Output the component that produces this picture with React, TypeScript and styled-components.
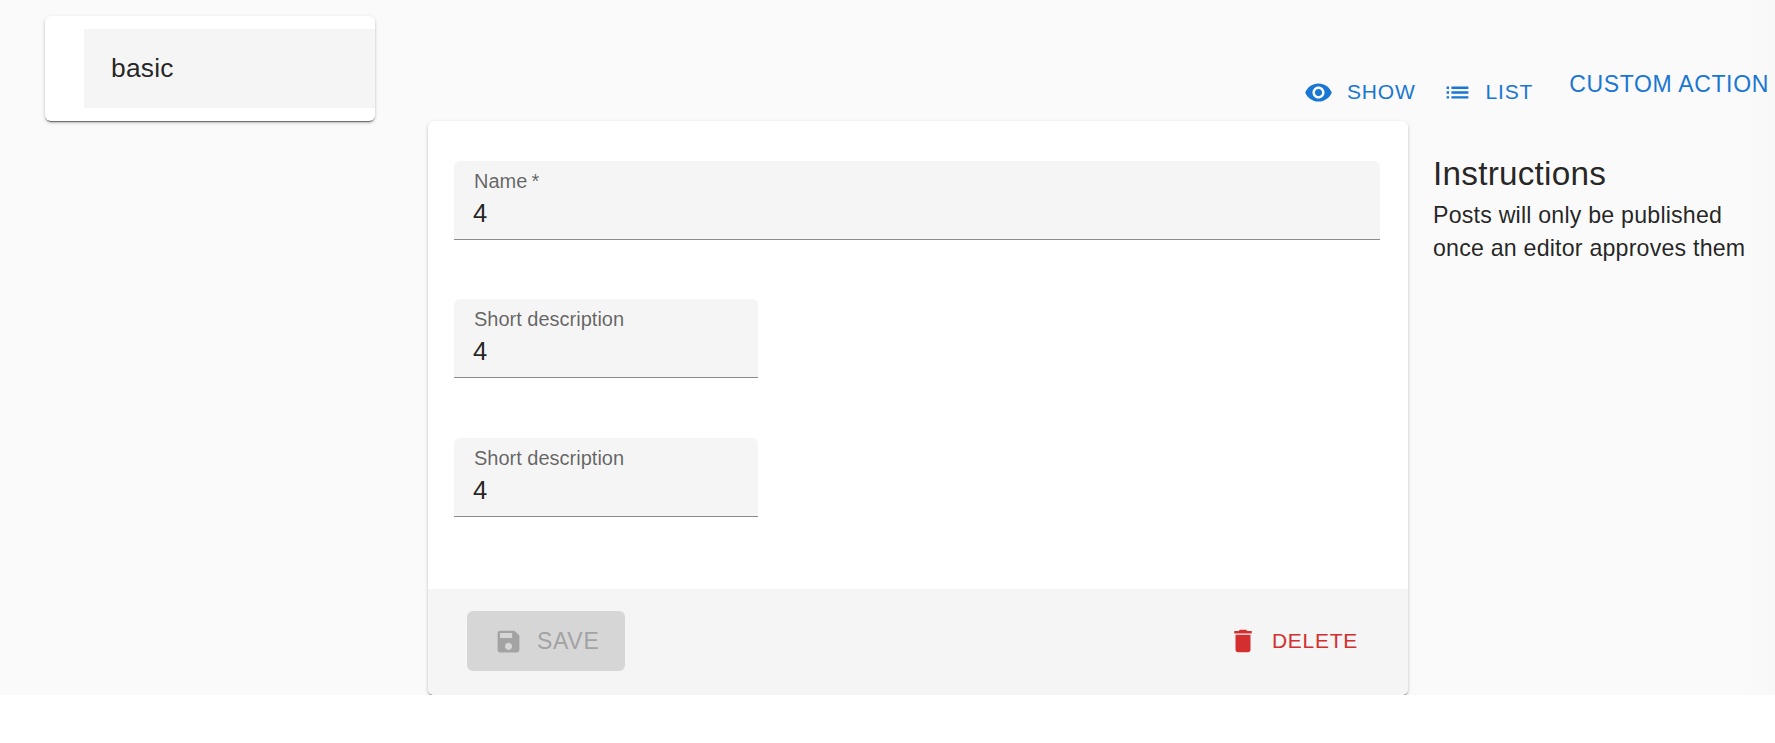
import React from 'react';
import styled, { createGlobalStyle } from 'styled-components';

const Global = createGlobalStyle`
  html, body { margin: 0; padding: 0; background: #fff; }
  body { font-family: "Liberation Sans", Arial, sans-serif; color: rgba(0,0,0,0.87); }
`;
const cardShadow = '0 2px 1px -1px rgba(0,0,0,.5), 0 2px 3px 0 rgba(0,0,0,.16), 0 1px 4px 0 rgba(0,0,0,.1)';
const Page = styled.div`
  display: flex; align-items: flex-start; height: 695px; overflow: hidden;
  background: linear-gradient(90deg, #fafafa calc(100% - 30px), #f8f8f8 100%);
`;
const Sidebar = styled.nav`
  flex: none; width: 330px; margin: 16px 0 0 45px; padding: 13px 0 13px 39px; box-sizing: border-box;
  background: #fff; border-radius: 6px; box-shadow: ${cardShadow};
`;
const MenuItem = styled.div`
  height: 79px; display: flex; align-items: center; padding-left: 27px; background: #f5f5f5;
  font-size: 26.4px; letter-spacing: .24px;
`;
const Content = styled.main`
  flex: 1; min-width: 0; margin-left: 53px; display: flex; flex-direction: column;
`;
const Actions = styled.div`
  height: 121px; display: flex; justify-content: flex-end; align-items: flex-start;
  color: #1976d2; padding-right: 6px;
`;
const ActionLink = styled.a`
  display: flex; align-items: center; gap: 14px; margin: 75px 26px 0 0;
  font-size: 21px; letter-spacing: .8px; line-height: 34px; height: 34px;
  svg { width: 29px; height: 29px; fill: currentColor; }
  &:first-child { margin-right: 27px; }
`;
const CustomAction = styled.a`
  margin: 67px 0 0 10px; font-size: 23px; letter-spacing: .66px; line-height: 34px;
`;
const Row = styled.div`display: flex; align-items: flex-start;`;
const Card = styled.section`
  flex: none; width: 980px; height: 574px; background: #fff; border-radius: 6px; overflow: hidden;
  display: flex; flex-direction: column; box-shadow: ${cardShadow};
`;
const FormBody = styled.div`
  flex: 1; padding: 40px 28px 0 26px; display: flex; flex-direction: column; gap: 59px;
  & > div:nth-child(3) { margin-top: 1px; }
`;
const Field = styled.div<{ $w: number }>`
  width: ${p => p.$w}px; height: 79px; box-sizing: border-box; padding: 8px 20px 0;
  background: #f5f5f5; border-radius: 6px 6px 0 0; border-bottom: 1px solid #8b8b8b;
`;
const FieldLabel = styled.div`
  font-size: 20px; line-height: 24px; color: rgba(0,0,0,.6);
`;
const FieldValue = styled.div`
  font-size: 25.6px; line-height: 32px; margin: 4px 0 0 -1px;
`;
const Toolbar = styled.div`
  height: 106px; background: #f5f5f5; display: flex; align-items: center; justify-content: space-between;
  padding: 0 50px 0 39px; flex: none;
`;
const SaveButton = styled.button`
  width: 158px; height: 60px; border: 0; padding: 0 0 0 27px; border-radius: 6px; background: #d6d6d6;
  display: flex; align-items: center; gap: 14px; color: #a3a3a3;
  font: 23px "Liberation Sans", Arial, sans-serif; letter-spacing: .7px;
  margin-top: -2px;
  svg { width: 29px; height: 29px; fill: currentColor; }
`;
const DeleteButton = styled.a`
  display: flex; align-items: center; gap: 14px; color: #d32f2f; margin-top: -2px;
  font-size: 21px; letter-spacing: .72px;
  svg { width: 30px; height: 30px; fill: currentColor; }
`;
const Aside = styled.aside`padding: 27px 0 0 25px;`;
const AsideTitle = styled.div`font-size: 33.3px; line-height: 51px; letter-spacing: .24px;`;
const AsideText = styled.div`font-size: 23.2px; line-height: 33px; letter-spacing: .2px;`;

const Icon = ({ d }: { d: string }) => <svg viewBox="0 0 24 24"><path d={d} /></svg>;

export default function App() {
  return (
    <>
      <Global />
      <Page>
        <Sidebar><MenuItem>basic</MenuItem></Sidebar>
        <Content>
          <Actions>
            <ActionLink><Icon d="M12 4.5C7 4.5 2.73 7.61 1 12c1.73 4.39 6 7.5 11 7.5s9.27-3.11 11-7.5c-1.73-4.39-6-7.5-11-7.5zM12 17c-2.76 0-5-2.24-5-5s2.24-5 5-5 5 2.24 5 5-2.24 5-5 5zm0-8c-1.66 0-3 1.34-3 3s1.34 3 3 3 3-1.34 3-3-1.34-3-3-3z" />SHOW</ActionLink>
            <ActionLink><Icon d="M3 13h2v-2H3v2zm0 4h2v-2H3v2zm0-8h2V7H3v2zm4 4h14v-2H7v2zm0 4h14v-2H7v2zM7 7v2h14V7H7z" />LIST</ActionLink>
            <CustomAction>CUSTOM ACTION</CustomAction>
          </Actions>
          <Row>
            <Card>
              <FormBody>
                <Field $w={926}><FieldLabel>Name{'\u2009'}*</FieldLabel><FieldValue>4</FieldValue></Field>
                <Field $w={304}><FieldLabel>Short description</FieldLabel><FieldValue>4</FieldValue></Field>
                <Field $w={304}><FieldLabel>Short description</FieldLabel><FieldValue>4</FieldValue></Field>
              </FormBody>
              <Toolbar>
                <SaveButton><Icon d="M17 3H5c-1.11 0-2 .9-2 2v14c0 1.1.89 2 2 2h14c1.1 0 2-.9 2-2V7l-4-4zm-5 16c-1.66 0-3-1.34-3-3s1.34-3 3-3 3 1.34 3 3-1.34 3-3 3zm3-10H5V5h10v4z" />SAVE</SaveButton>
                <DeleteButton><Icon d="M6 19c0 1.1.9 2 2 2h8c1.1 0 2-.9 2-2V7H6v12zM19 4h-3.5l-1-1h-5l-1 1H5v2h14V4z" />DELETE</DeleteButton>
              </Toolbar>
            </Card>
            <Aside>
              <AsideTitle>Instructions</AsideTitle>
              <AsideText>Posts will only be published<br />once an editor approves them</AsideText>
            </Aside>
          </Row>
        </Content>
      </Page>
    </>
  );
}
